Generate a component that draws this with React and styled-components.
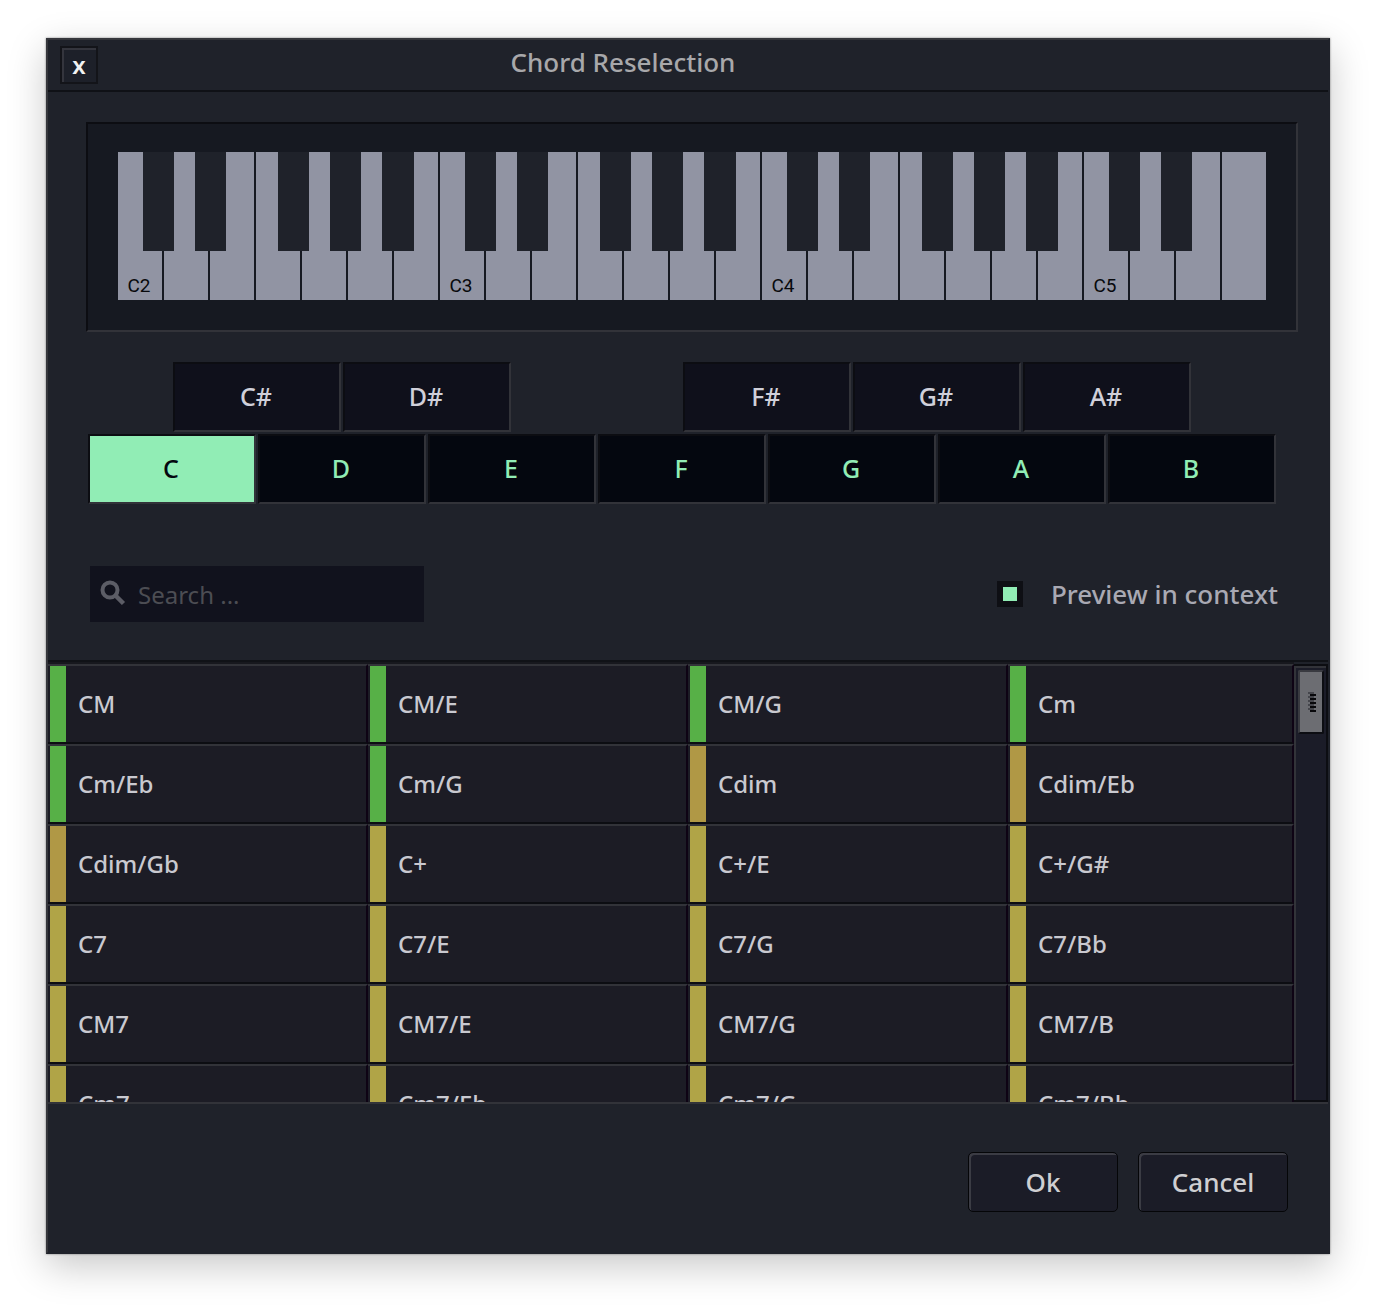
import React from 'react';
import styled, { createGlobalStyle } from 'styled-components';

const surface = '#1f222a';
const well = '#161921';
const cellColor = '#1c1c25';
const light = '#323339';
const dark = '#0c0d12';
const mint = '#91edb5';
const green = '#57b047';
const amber = '#b09845';
const olive = '#b0a447';

const GlobalStyle = createGlobalStyle`
  *, *::before, *::after {
    box-sizing: border-box;
  }

  body {
    margin: 0;
    background-color: #ffffff;
    font-family: 'Noto Sans', 'Open Sans', sans-serif;
  }

  button, input {
    font-family: inherit;
    margin: 0;
  }
`;

const Dialog = styled.main`
  background-color: ${surface};
  border: 2px solid ${surface};
  border-left-color: #35363b;
  border-top-color: #35363b;
  box-shadow: 0 0 2px rgba(0, 0, 0, 0.45), 0 12px 36px rgba(0, 0, 0, 0.22);
  margin: 38px 46px 54px;
`;

const TitleBar = styled.header`
  align-items: center;
  border-bottom: 2px solid #0f1116;
  display: flex;
  height: 52px;
  padding: 0 180px 0 12px;
`;

const CloseButton = styled.button`
  background-color: #1d2029;
  border: 2px solid #131419;
  box-shadow: inset 2px 2px 0 #34353d;
  color: #f2f2f2;
  font-size: 24px;
  font-weight: 600;
  height: 38px;
  line-height: 28px;
  padding: 0;
  width: 38px;
`;

const Title = styled.h1`
  color: #a8a8aa;
  flex: 1;
  font-size: 26px;
  font-weight: 500;
  line-height: 36px;
  margin: 0;
  padding-bottom: 6px;
  text-align: center;
`;

const Inset = styled.section`
  background-color: ${well};
  border: 2px solid ${dark};
  border-bottom-color: ${light};
  border-right-color: ${light};
  margin: 30px 30px 0 38px;
  padding: 28px 30px 30px;
`;

const Keys = styled.div`
  display: flex;
  gap: 2px;
  height: 148px;
`;

const KeySlot = styled.div`
  flex: 1;
  position: relative;
`;

const WhiteKey = styled.button`
  align-items: flex-end;
  background-color: #9194a3;
  border: none;
  color: #08090c;
  display: flex;
  font-family: Roboto, 'Noto Sans', sans-serif;
  font-size: 19px;
  height: 100%;
  justify-content: center;
  line-height: 24px;
  padding: 0 2px 2px 0;
  width: 100%;
`;

const BlackKey = styled.button`
  background-color: ${surface};
  border: none;
  height: 99px;
  left: ${props => props.$left}%;
  padding: 0;
  position: absolute;
  top: 0;
  width: 72%;
  z-index: 1;
`;

const Notes = styled.section`
  display: grid;
  gap: 2px;
  grid-template-columns: repeat(14, 1fr);
  margin: 30px 52px 0 40px;
`;

const Note = styled.button`
  background-color: ${props => props.$active ? mint : props.$sharp ? '#0f101b' : '#04070f'};
  border: 2px solid ${dark};
  border-bottom-color: ${light};
  border-right-color: ${light};
  color: ${props => props.$active ? '#04070f' : props.$sharp ? '#d0d0da' : mint};
  font-size: 25px;
  font-weight: 500;
  grid-column: ${props => props.$column} / span 2;
  height: 70px;
  padding: 0 2px 2px 0;
`;

const Filters = styled.section`
  align-items: center;
  display: flex;
  justify-content: space-between;
  padding: 62px 50px 38px 42px;
`;

const Search = styled.label`
  align-items: center;
  background-color: #11121d;
  display: flex;
  gap: 12px;
  height: 56px;
  padding: 0 10px;
  width: 334px;

  svg {
    flex: none;
  }
`;

const SearchInput = styled.input`
  background: none;
  border: none;
  color: #d0d0d6;
  flex: 1;
  font-size: 24px;
  min-width: 0;
  outline: none;
  padding: 0;

  &::placeholder {
    color: #4c4d53;
    opacity: 1;
  }
`;

const Preview = styled.label`
  align-items: center;
  color: #a9a9b3;
  display: flex;
  font-size: 26px;
  font-weight: 500;
  gap: 28px;
  line-height: 36px;
`;

const Checkbox = styled.input`
  appearance: none;
  background-color: #0e0f14;
  border: 6px solid #0e0f14;
  height: 26px;
  margin: 0;
  width: 26px;

  &:checked {
    background-color: ${mint};
  }
`;

const ChordArea = styled.section`
  border-bottom: 2px solid ${light};
  border-top: 2px solid #101217;
  display: flex;
  height: 444px;
`;

const ChordGrid = styled.div`
  border-top: 2px solid #17181e;
  display: grid;
  flex: 1;
  grid-auto-rows: 80px;
  grid-template-columns: 320fr 320fr 320fr 286fr;
  overflow: hidden;
`;

const Chord = styled.button`
  align-items: stretch;
  background-color: ${cellColor};
  border: none;
  border-bottom: 2px solid ${dark};
  border-right: 2px solid #0e0314;
  border-top: 2px solid ${light};
  color: #c9c9d0;
  display: flex;
  font-size: 24px;
  font-weight: 500;
  gap: 12px;
  line-height: 76px;
  padding: 0 0 0 2px;
  text-align: left;

  &::before {
    background-color: ${props => props.$color};
    content: '';
    width: 16px;
  }
`;

const ScrollTrack = styled.div`
  background-color: #1b1c28;
  border: 2px solid ${dark};
  border-left: none;
  box-shadow: inset 2px 2px 0 ${light};
  margin-top: 2px;
  padding: 4px 2px 0 4px;
  width: 34px;
`;

const ScrollThumb = styled.div`
  background-color: #6c6d72;
  border: 2px solid #393a40;
  border-bottom-color: ${dark};
  border-right-color: ${dark};
  border-radius: 2px;
  display: flex;
  height: 64px;
  justify-content: center;
  padding: 20px 0 0 2px;
`;

const Actions = styled.footer`
  display: flex;
  gap: 20px;
  justify-content: flex-end;
  padding: 48px 40px 40px;
`;

const ActionButton = styled.button`
  background-color: #1b1c27;
  border: 1px solid #050608;
  border-radius: 5px;
  box-shadow: inset 2px 2px 0 #3b3c44;
  color: #cfcfd2;
  font-size: 26px;
  font-weight: 500;
  height: 60px;
  padding: 0;
  width: 150px;
`;

// black keys sit off-centre on the seams, so each has its own offset
const octave = [
  { name: 'C', sharp: 56 },
  { name: 'D', sharp: 70 },
  { name: 'E' },
  { name: 'F', sharp: 49 },
  { name: 'G', sharp: 63 },
  { name: 'A', sharp: 78 },
  { name: 'B' }
];

const pianoKeys = Array.from({ length: 25 }, (_, i) => ({
  ...octave[i % 7],
  number: 2 + Math.floor(i / 7),
  last: i === 24
}));

const sharps = [
  { name: 'C#', column: 2 },
  { name: 'D#', column: 4 },
  { name: 'F#', column: 8 },
  { name: 'G#', column: 10 },
  { name: 'A#', column: 12 }
];

const chords = [
  ['CM', green], ['CM/E', green], ['CM/G', green], ['Cm', green],
  ['Cm/Eb', green], ['Cm/G', green], ['Cdim', amber], ['Cdim/Eb', amber],
  ['Cdim/Gb', amber], ['C+', olive], ['C+/E', olive], ['C+/G#', olive],
  ['C7', olive], ['C7/E', olive], ['C7/G', olive], ['C7/Bb', olive],
  ['CM7', olive], ['CM7/E', olive], ['CM7/G', olive], ['CM7/B', olive],
  ['Cm7', olive], ['Cm7/Eb', olive], ['Cm7/G', olive], ['Cm7/Bb', olive]
];

const Piano = () => (
  <Inset>
    <Keys>
      {pianoKeys.map(key => (
        <KeySlot key={key.name + key.number}>
          <WhiteKey aria-label={key.name + key.number}>
            {key.name === 'C' && key.name + key.number}
          </WhiteKey>
          {key.sharp && !key.last && (
            <BlackKey $left={key.sharp} aria-label={`${key.name}#${key.number}`} />
          )}
        </KeySlot>
      ))}
    </Keys>
  </Inset>
);

const SearchIcon = () => (
  <svg width="26" height="28" viewBox="0 0 26 28" fill="none" stroke="#5c5d66" strokeWidth="4">
    <circle cx="10" cy="10" r="7.500" />
    <path d="M15 15l8.500 8.500" strokeWidth="4.500" />
  </svg>
);

const Grip = () => (
  <svg width="8" height="20" viewBox="0 0 8 20">
    {[0, 4, 8, 12, 16].map(y => (
      <g key={y}>
        <rect x="0" y={y} width="6" height="2" fill="#45464c" />
        <rect x="2" y={y + 2} width="6" height="2" fill="#08080b" />
      </g>
    ))}
  </svg>
);

class App extends React.Component {
  state = {
    root: 'C',
    search: '',
    preview: true
  }

  selectRoot = (root) => {
    this.setState(() => ({ root }));
  };

  changeSearch = (e) => {
    const search = e.target.value;
    this.setState(() => ({ search }));
  };

  togglePreview = () => {
    this.setState(state => ({ preview: !state.preview }));
  };

  render() {
    const { root, search, preview } = this.state;

    return (
      <>
        <GlobalStyle />
        <Dialog>
          <TitleBar>
            <CloseButton aria-label="Close">x</CloseButton>
            <Title>Chord Reselection</Title>
          </TitleBar>
          <Piano />
          <Notes>
            {sharps.map(({ name, column }) => (
              <Note
                key={name}
                $sharp
                $column={column}
                $active={root === name}
                onClick={() => this.selectRoot(name)}
              >
                {name}
              </Note>
            ))}
            {['C', 'D', 'E', 'F', 'G', 'A', 'B'].map((name, i) => (
              <Note
                key={name}
                $column={i * 2 + 1}
                $active={root === name}
                onClick={() => this.selectRoot(name)}
              >
                {name}
              </Note>
            ))}
          </Notes>
          <Filters>
            <Search>
              <SearchIcon />
              <SearchInput
                aria-label="Search"
                placeholder="Search ..."
                value={search}
                onChange={this.changeSearch}
              />
            </Search>
            <Preview>
              <Checkbox type="checkbox" checked={preview} onChange={this.togglePreview} />
              Preview in context
            </Preview>
          </Filters>
          <ChordArea>
            <ChordGrid>
              {chords
                .filter(([name]) => name.toLowerCase().includes(search.toLowerCase()))
                .map(([name, color]) => (
                  <Chord key={name} $color={color}>{name}</Chord>
                ))}
            </ChordGrid>
            <ScrollTrack>
              <ScrollThumb>
                <Grip />
              </ScrollThumb>
            </ScrollTrack>
          </ChordArea>
          <Actions>
            <ActionButton>Ok</ActionButton>
            <ActionButton>Cancel</ActionButton>
          </Actions>
        </Dialog>
      </>
    );
  }
}

export default App;
